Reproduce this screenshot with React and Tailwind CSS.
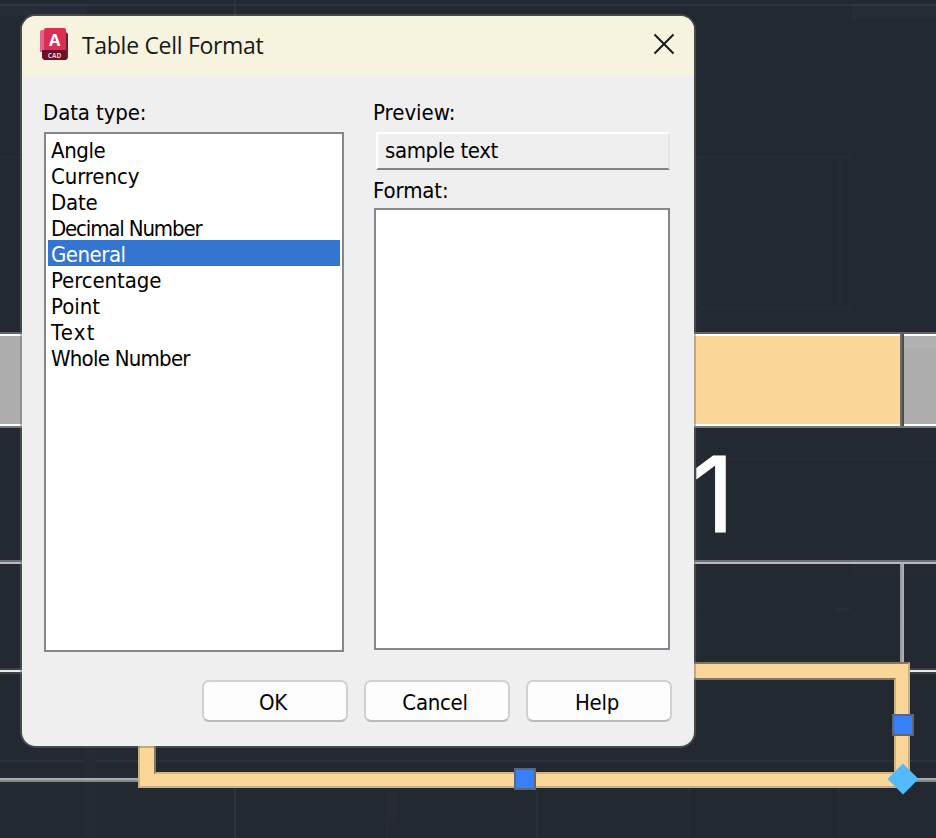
const ITEMS = [
  { name: "Angle", tracking: "tracking-[-0.4px]" },
  { name: "Currency", tracking: "tracking-[-0.1px]" },
  { name: "Date", tracking: "tracking-[-0.2px]" },
  { name: "Decimal Number", tracking: "tracking-[-1.15px]" },
  { name: "General", tracking: "tracking-[-0.5px]" },
  { name: "Percentage", tracking: "tracking-[-0.1px]" },
  { name: "Point", tracking: "tracking-[0px]" },
  { name: "Text", tracking: "tracking-[1.3px]" },
  { name: "Whole Number", tracking: "tracking-[-0.75px]" },
];

const GRID = [
  "left-0 top-[4px] w-full h-[2px] bg-[#2e3441]",
  "left-0 top-[6px] w-[86px] h-[10px] bg-[#262d37]",
  "left-[852px] top-[6px] w-[84px] h-[12px] bg-[#262d37]",
  "left-[234px] top-0 w-[2px] h-[838px] bg-[#2c3240]",
  "left-0 top-[156px] w-[852px] h-[2px] bg-[#272c36]",
  "left-[838px] top-[158px] w-[4px] h-[148px] bg-[#272b36]",
  "left-[696px] top-[158px] w-[4px] h-[568px] bg-[#252b37]",
  "left-[696px] top-[306px] w-[156px] h-[4px] bg-[#252b35]",
  "left-[696px] top-[458px] w-[240px] h-[2px] bg-[#292c37]",
  "left-[852px] top-[564px] w-[84px] h-[12px] bg-[#262a32]",
  "left-[696px] top-[610px] w-[156px] h-[2px] bg-[#252b34]",
  "left-[838px] top-[608px] w-[12px] h-[2px] bg-[#2d2d39]",
  "left-[852px] top-[610px] w-[84px] h-[12px] bg-[#242a32]",
  "left-0 top-[760px] w-full h-[2px] bg-[#2d313e]",
  "left-[84px] top-[748px] w-[12px] h-[90px] bg-[#242b33]",
  "left-[386px] top-[748px] w-[2px] h-[90px] bg-[#272b35]",
  "left-[388px] top-[792px] w-[10px] h-[30px] bg-[#272a33]",
  "left-[536px] top-[748px] w-[2px] h-[90px] bg-[#292d38]",
  "left-[688px] top-[748px] w-[2px] h-[90px] bg-[#272c36]",
  "left-[838px] top-[726px] w-[2px] h-[112px] bg-[#292c37]",
];

const TABLE_LINES = [
  "left-0 top-[560px] w-full h-[2px] bg-[#6d7175]",
  "left-0 top-[562px] w-full h-[2px] bg-[#b9babf]",
  "left-[900px] top-[564px] w-[2px] h-[98px] bg-[#98999d]",
  "left-[902px] top-[564px] w-[2px] h-[98px] bg-[#aeaeb2]",
  "left-0 top-[668px] w-full h-[6px] bg-[#3c4145]",
  "left-0 top-[670px] w-full h-[2px] bg-[#e9e9ea]",
  "left-0 top-[778px] w-full h-[2px] bg-[#a9abad]",
  "left-0 top-[780px] w-full h-[2px] bg-[#85888b]",
];

function Canvas() {
  return (
    <>
      {GRID.map((c) => <div key={c} className={"absolute " + c} />)}
      <div className="absolute left-0 top-[332px] flex h-[96px] w-full flex-col">
        <div className="h-[2px] bg-[#626365]" />
        <div className="flex h-[92px]">
          <div className="w-[900px] border-y-2 border-white bg-[linear-gradient(90deg,#adadad_22px,#fad798_22px)]" />
          <div className="w-[2px] bg-[#756b5a]" />
          <div className="w-[2px] bg-[#474d50]" />
          <div className="w-[32px] border-y-2 border-white bg-[#adadad]">
            <div className="h-[12px] bg-[#b1b1b1]" />
          </div>
        </div>
        <div className="h-[2px] bg-[#777979]" />
      </div>
      <div className="absolute left-[692px] top-[434px] font-['Inter',sans-serif] text-[104px] leading-[120px] text-white [-webkit-text-stroke:1px_white]">1</div>
      {TABLE_LINES.map((c) => <div key={c} className={"absolute " + c} />)}
      <div className="absolute left-[138px] top-[662px] h-[126px] w-[772px] border-2 border-[#c9b084] border-t-[#827763]">
        <div className="h-full border-[14px] border-b-[12px] border-r-[12px] border-[#fad798]">
          <div className="h-full border-2 border-[#d0b584] border-t-[#827763] border-l-[#827763] bg-[#222930]" />
        </div>
      </div>
      <div className="absolute left-[156px] top-[760px] h-[2px] w-[738px] bg-[#2d313e]" />
      <div className="absolute left-[514px] top-[768px] size-[22px] border-2 border-[#5d6675] bg-[#3780f9]" />
      <div className="absolute left-[892px] top-[714px] size-[22px] border-2 border-[#5d6675] bg-[#3780f9]" />
      <svg className="absolute left-[887px] top-[763px]" width="32" height="32" viewBox="0 0 32 32">
        <path d="M16 .5 31.5 16 16 31.5.5 16Z" fill="#54bbfa" />
      </svg>
    </>
  );
}

function AppIcon() {
  return (
    <svg width="28" height="32" viewBox="0 0 28 32">
      <path d="M0 4Q0 2 2 2H5V22L2 24H0Z" fill="#e0658a" />
      <path d="M26 4 28 6V30L26 32Z" fill="#7c1733" />
      <path d="M4 2Q4 0 6 0H24Q26 0 26 2V22H4Z" fill="#d92f55" />
      <path d="M2 22H26V32H4L2 30Z" fill="#6b1028" />
      <text x="14.7" y="17.8" textAnchor="middle" fontFamily="Open Sans, sans-serif" fontWeight="700" fontSize="16.5" fill="#fff" style={{ fontStretch: "normal" }}>A</text>
      <text x="14.5" y="29.5" textAnchor="middle" fontFamily="Open Sans, sans-serif" fontWeight="700" fontSize="6.5" fill="#e8c9d1" style={{ fontStretch: "normal" }}>CAD</text>
    </svg>
  );
}

function Button({ children }) {
  return (
    <button className="h-[42px] w-[146px] rounded-[7px] border-2 border-[#d0d0d0] border-b-[#bababa] bg-[#fdfdfd] pr-[4px] pt-[3px] tracking-[-0.3px]">{children}</button>
  );
}

export default function App() {
  return (
    <div className="relative h-[838px] w-[936px] overflow-hidden bg-[#222930] font-['DejaVu_Sans_Condensed','DejaVu_Sans',sans-serif] text-[22px] leading-[26px] text-black [font-stretch:condensed]">
      <Canvas />
      <div className="absolute left-[22px] top-[16px] flex h-[730px] w-[672px] flex-col rounded-[14px] bg-[#efefef] shadow-[0_0_0_2px_rgba(117,112,110,0.44)]">
        <header className="flex h-[60px] items-center rounded-t-[14px] bg-[#f6f3df] pb-[4px] pl-[18px] pr-[19px]">
          <AppIcon />
          <h1 className="ml-[14px] flex-1 pt-[2px] font-['Open_Sans',sans-serif] text-[23px] tracking-[-0.3px] text-[#191919] [font-stretch:normal]">
            Table Cell Format
          </h1>
          <svg width="22" height="22" viewBox="0 0 22 22" stroke="#191919" strokeWidth="2">
            <path d="M1.5 1.5 20.5 20.5M20.5 1.5 1.5 20.5" />
          </svg>
        </header>
        <div className="flex pl-[22px] pr-[24px] pt-[23px]">
          <section className="w-[300px]">
            <h2 className="-ml-[1px] h-[33px] pt-[1px] tracking-[-0.1px]">Data type:</h2>
            <ul className="h-[520px] border-2 border-[#83888f] bg-white p-[2px]">
              {ITEMS.map((i) => (
                <li key={i.name} className={(i.name === "General" ? "bg-[#3375d0] text-white " : "") + "h-[26px] pl-[3px] pt-[2px] leading-[25px] " + i.tracking}>
                  {i.name}
                </li>
              ))}
            </ul>
          </section>
          <section className="ml-[30px] w-[296px]">
            <h2 className="-ml-[1px] h-[31px] pt-[1px]">Preview:</h2>
            <div className="ml-[2px] mt-[2px] h-[38px] border-2 border-b-[#838383] border-l-white border-r-[#e6e6e6] border-t-white pl-[7px] pt-[4px] tracking-[-0.4px]">
              sample text
            </div>
            <h2 className="-ml-[1px] mt-[7px] h-[31px] pt-[1px] tracking-[-0.1px]">Format:</h2>
            <div className="h-[442px] border-2 border-[#83888f] bg-white" />
          </section>
        </div>
        <footer className="mt-[28px] flex justify-end gap-[16px] pr-[22px]">
          <Button>OK</Button>
          <Button>Cancel</Button>
          <Button>Help</Button>
        </footer>
      </div>
    </div>
  );
}
